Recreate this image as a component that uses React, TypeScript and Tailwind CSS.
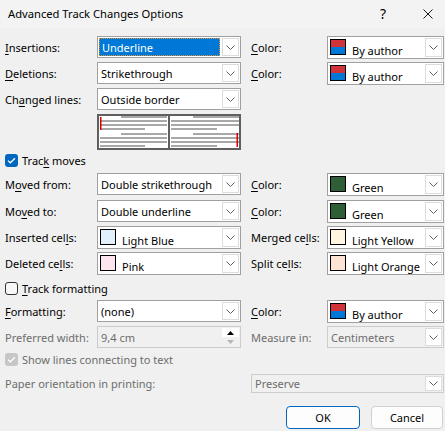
import React from "react";

const Chevron = () => (
  <svg width="9" height="5" viewBox="0 0 9 5">
    <path d="M0.5 0.5 L4.5 4.5 L8.5 0.5" fill="none" stroke="#5f5f5f" strokeWidth="1" />
  </svg>
);

const Key = ({ children }: { children: React.ReactNode }) => (
  <span className="underline underline-offset-[2px] decoration-1">{children}</span>
);

const Swatch = ({ fill, split }: { fill?: string; split?: boolean }) => (
  <span className="flex flex-col w-[16px] h-[16px] border border-black shrink-0">
    {split ? (
      <>
        <span className="flex-1 bg-[#d13438]" />
        <span className="flex-1 bg-[#0078d7]" />
      </>
    ) : (
      <span className="flex-1" style={{ background: fill }} />
    )}
  </span>
);

type ComboProps = {
  value: string;
  selected?: boolean;
  disabled?: boolean;
  swatch?: React.ReactNode;
  className?: string;
};

const Combo = ({ value, selected, disabled, swatch, className = "" }: ComboProps) => (
  <div
    className={`flex items-stretch border ${
      disabled ? "border-[#cccccc] bg-[#f0f0f0] text-[#6d6d6d]" : "border-[#a0a0a0] bg-white"
    } ${className}`}
  >
    {selected ? (
      <div className="flex-1 m-[1px] flex items-center bg-[#0078d7] text-white pl-[2px] border border-dotted border-[#e8912d]">
        {value}
      </div>
    ) : swatch ? (
      <div className="flex-1 flex items-center pl-[2px]">
        {swatch}
        <span className="ml-[6px] pt-[6px]">{value}</span>
      </div>
    ) : (
      <div className="flex-1 flex items-center pl-[3px]">{value}</div>
    )}
    <div className="w-[17px] m-[1px] flex items-center justify-center border border-[#dcdcdc] bg-white">
      <Chevron />
    </div>
  </div>
);

const Check = ({ state }: { state: "on" | "off" | "disabled" }) => {
  if (state === "off")
    return <span className="w-[13px] h-[13px] rounded-[3px] border border-[#333333] bg-[#f7f7f7] shrink-0" />;
  return (
    <span
      className={`w-[13px] h-[13px] rounded-[3px] flex items-center justify-center shrink-0 ${
        state === "on" ? "bg-[#0067c0]" : "bg-[#c6c6c6]"
      }`}
    >
      <svg width="9" height="7" viewBox="0 0 9 7">
        <path d="M1 3.6 L3.3 5.8 L8 1.2" fill="none" stroke="white" strokeWidth="1.3" />
      </svg>
    </span>
  );
};

// little picture of the changed-lines border placement
const Preview = () => (
  <div className="flex w-[144px] h-[36px] border-2 border-[#5f5f5f] bg-white">
    <svg width="69" height="32" viewBox="0 0 69 32">
      <g fill="#a8a8a8">
        <rect x="22" y="0" width="46" height="2" />
        <rect x="1" y="4" width="67" height="2" />
        <rect x="1" y="8" width="67" height="2" />
        <rect x="1" y="12" width="45" height="2" />
        <rect x="22" y="17" width="46" height="2" />
        <rect x="1" y="21" width="67" height="2" />
        <rect x="1" y="25" width="67" height="2" />
        <rect x="1" y="29" width="45" height="2" />
      </g>
      <rect x="1" y="1" width="1.5" height="13" fill="#e00000" />
    </svg>
    <div className="w-[2px] bg-[#5f5f5f]" />
    <svg width="69" height="32" viewBox="0 0 69 32">
      <g fill="#a8a8a8">
        <rect x="23" y="0" width="46" height="2" />
        <rect x="1" y="4" width="68" height="2" />
        <rect x="1" y="8" width="68" height="2" />
        <rect x="1" y="12" width="46" height="2" />
        <rect x="23" y="17" width="46" height="2" />
        <rect x="1" y="21" width="68" height="2" />
        <rect x="1" y="25" width="68" height="2" />
        <rect x="1" y="29" width="46" height="2" />
      </g>
      <rect x="66.5" y="17" width="1.5" height="14" fill="#e00000" />
    </svg>
  </div>
);

const Spin = () => (
  <div className="flex w-[144px] h-[22px] border border-[#cccccc] bg-[#f0f0f0]">
    <div className="flex-1 flex items-center pl-[3px] text-[#6d6d6d]">9,4 cm</div>
    <div className="w-[17px] m-[1px] flex flex-col">
      <div className="flex-1 bg-white flex items-center justify-center">
        <svg width="7" height="4" viewBox="0 0 7 4">
          <path d="M0 4 L3.5 0 L7 4 Z" fill="#000" />
        </svg>
      </div>
      <div className="flex-1 flex items-center justify-center">
        <svg width="7" height="4" viewBox="0 0 7 4">
          <path d="M0 0 L3.5 4 L7 0 Z" fill="#b5b5b5" />
        </svg>
      </div>
    </div>
  </div>
);

const Row = ({ children, className = "" }: { children: React.ReactNode; className?: string }) => (
  <div className={`flex items-center h-[24px] pl-[5px] ${className}`}>{children}</div>
);

const Label = ({ children, dim }: { children: React.ReactNode; dim?: boolean }) => (
  <div className={`w-[92px] shrink-0 ${dim ? "text-[#6d6d6d]" : ""}`}>{children}</div>
);

const RLabel = ({ children, dim }: { children: React.ReactNode; dim?: boolean }) => (
  <div className={`w-[76px] ml-[10px] shrink-0 ${dim ? "text-[#6d6d6d]" : ""}`}>{children}</div>
);

export default function App() {
  return (
    <div
      className="w-[445px] h-[431px] bg-[#f0f0f0] text-black text-[11px] leading-none overflow-hidden flex flex-col"
      style={{ fontFamily: '"Noto Sans", "Liberation Sans", sans-serif' }}
    >
      <div className="h-[28px] flex items-center pl-[8px] bg-[#f3f3f3] text-[11.2px]">
        <span>Advanced Track Changes Options</span>
        <span className="ml-auto w-[20px] text-center text-[14px]">?</span>
        <span className="ml-[25px] w-[20px] mr-[7px] flex justify-center">
          <svg width="10" height="10" viewBox="0 0 10 10">
            <path d="M0.5 0.5 L9.5 9.5 M9.5 0.5 L0.5 9.5" stroke="#1a1a1a" strokeWidth="1" />
          </svg>
        </span>
      </div>

      <Row className="mt-[7px]">
        <Label>
          <Key>I</Key>nsertions:
        </Label>
        <Combo value="Underline" selected className="w-[144px] h-[22px]" />
        <RLabel>
          <Key>C</Key>olor:
        </RLabel>
        <Combo value="By author" swatch={<Swatch split />} className="w-[117px] h-[23px]" />
      </Row>
      <Row className="mt-[2px]">
        <Label>
          <Key>D</Key>eletions:
        </Label>
        <Combo value="Strikethrough" className="w-[144px] h-[22px]" />
        <RLabel>
          <Key>C</Key>olor:
        </RLabel>
        <Combo value="By author" swatch={<Swatch split />} className="w-[117px] h-[23px]" />
      </Row>
      <Row className="mt-[2px]">
        <Label>
          Ch<Key>a</Key>nged lines:
        </Label>
        <Combo value="Outside border" className="w-[144px] h-[22px]" />
      </Row>
      <div className="mt-[3px] pl-[97px]">
        <Preview />
      </div>

      <div className="mt-[2px] h-[16px] pl-[5px] flex items-center">
        <Check state="on" />
        <span className="ml-[4px]">
          Trac<Key>k</Key> moves
        </span>
      </div>

      <Row className="mt-[4px]">
        <Label>
          M<Key>o</Key>ved from:
        </Label>
        <Combo value="Double strikethrough" className="w-[144px] h-[22px]" />
        <RLabel>
          <Key>C</Key>olor:
        </RLabel>
        <Combo value="Green" swatch={<Swatch fill="#2e5e35" />} className="w-[117px] h-[23px]" />
      </Row>
      <Row className="mt-[3px]">
        <Label>
          Mo<Key>v</Key>ed to:
        </Label>
        <Combo value="Double underline" className="w-[144px] h-[22px]" />
        <RLabel>
          <Key>C</Key>olor:
        </RLabel>
        <Combo value="Green" swatch={<Swatch fill="#2e5e35" />} className="w-[117px] h-[23px]" />
      </Row>
      <Row className="mt-[2px]">
        <Label>
          Inserted cel<Key>l</Key>s:
        </Label>
        <Combo value="Light Blue" swatch={<Swatch fill="#e1f0fa" />} className="w-[144px] h-[23px]" />
        <RLabel>
          Merged ce<Key>l</Key>ls:
        </RLabel>
        <Combo value="Light Yellow" swatch={<Swatch fill="#fff5e1" />} className="w-[117px] h-[23px]" />
      </Row>
      <Row className="mt-[2px]">
        <Label>
          Deleted ce<Key>l</Key>ls:
        </Label>
        <Combo value="Pink" swatch={<Swatch fill="#fde5ef" />} className="w-[144px] h-[23px]" />
        <RLabel>
          Split ce<Key>l</Key>ls:
        </RLabel>
        <Combo value="Light Orange" swatch={<Swatch fill="#fde3d3" />} className="w-[117px] h-[23px]" />
      </Row>

      <div className="mt-[5px] h-[16px] pl-[5px] flex items-center">
        <Check state="off" />
        <span className="ml-[4px]">
          <Key>T</Key>rack formatting
        </span>
      </div>

      <Row className="mt-[3px]">
        <Label>
          <Key>F</Key>ormatting:
        </Label>
        <Combo value="(none)" className="w-[144px] h-[22px]" />
        <RLabel>
          <Key>C</Key>olor:
        </RLabel>
        <Combo value="By author" swatch={<Swatch split />} className="w-[117px] h-[23px]" />
      </Row>
      <Row className="mt-[2px]">
        <Label dim>Preferred width:</Label>
        <Spin />
        <RLabel dim>Measure in:</RLabel>
        <Combo value="Centimeters" disabled className="w-[117px] h-[22px]" />
      </Row>

      <div className="mt-[2px] h-[16px] pl-[5px] flex items-center">
        <Check state="disabled" />
        <span className="ml-[4px] text-[#6d6d6d]">Show lines connecting to text</span>
      </div>

      <Row className="mt-[4px]">
        <div className="w-[246px] shrink-0 text-[#6d6d6d]">Paper orientation in printing:</div>
        <Combo value="Preserve" disabled className="w-[193px] h-[19px]" />
      </Row>

      <div className="mt-[10px] h-[24px] flex items-center justify-end pr-[2px]">
        <button className="w-[74px] h-[23px] rounded-[4px] border border-[#0067c0] bg-[#fdfdfd] text-[11px]">
          OK
        </button>
        <button className="ml-[11px] w-[72px] h-[23px] rounded-[4px] border border-[#d0d0d0] bg-[#fdfdfd] text-[11px]">
          Cancel
        </button>
      </div>
    </div>
  );
}
